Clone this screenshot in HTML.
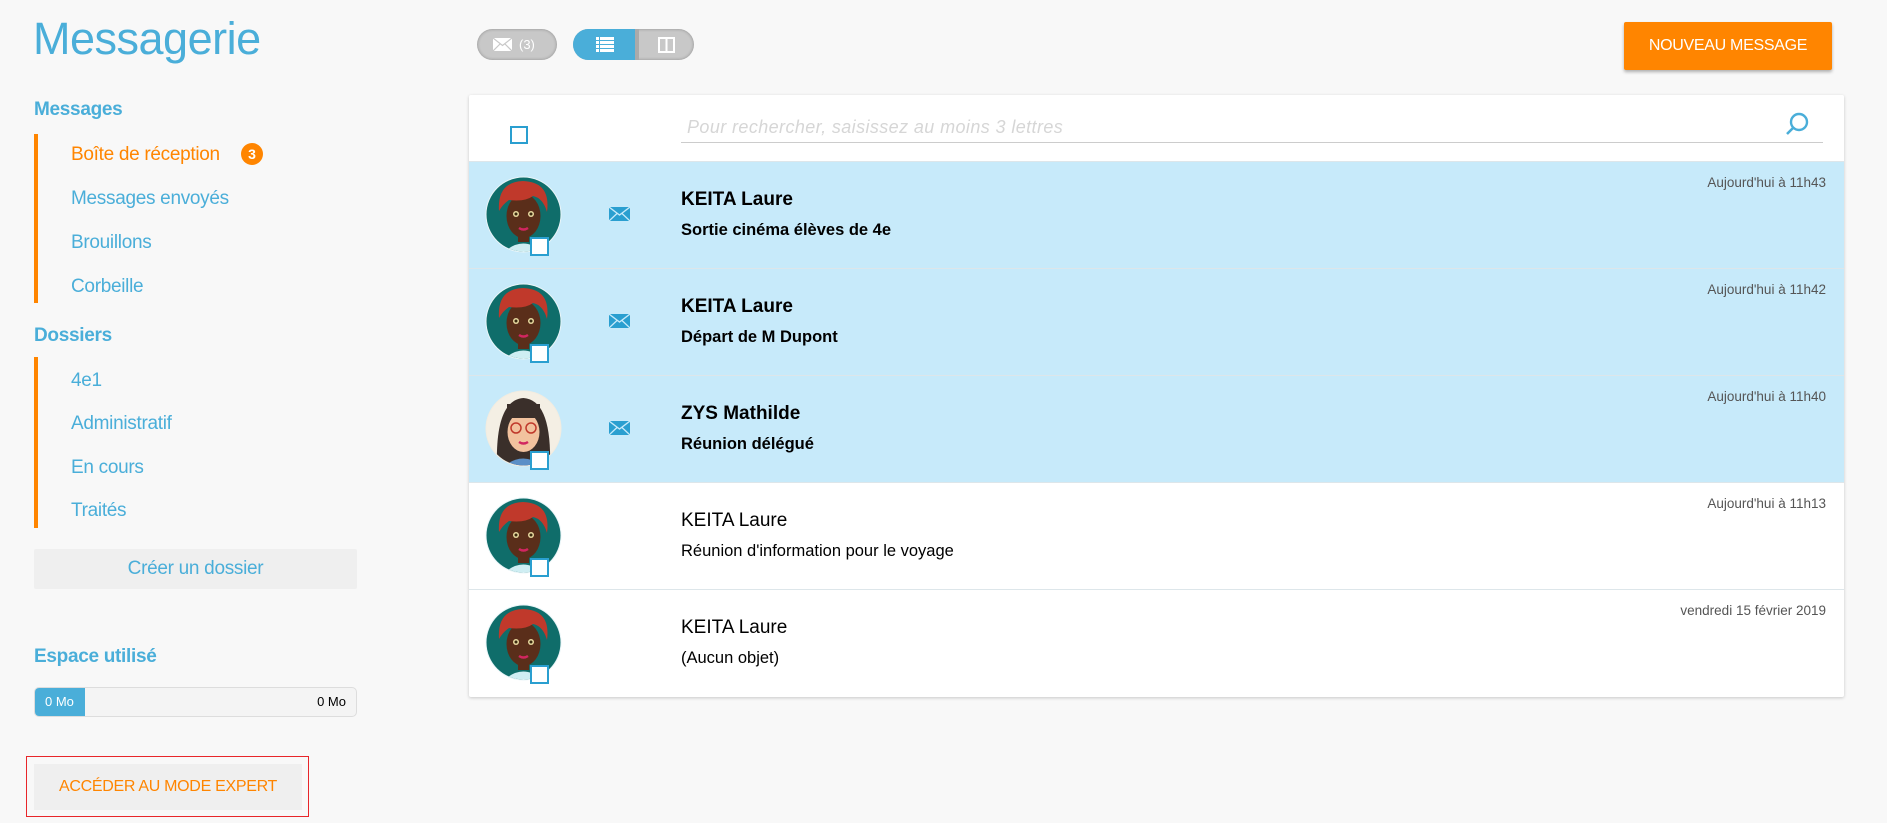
<!DOCTYPE html>
<html><head><meta charset="utf-8"><style>
*{margin:0;padding:0;box-sizing:border-box}
body{width:1887px;height:823px;background:#f8f8f8;font-family:"Liberation Sans",sans-serif;position:relative;overflow:hidden}
.a{position:absolute;white-space:nowrap}
.blue{color:#4aaed9}
.nav{font-size:19px;color:#4aaed9;left:71px;letter-spacing:-0.3px}
.bar{position:absolute;left:34px;width:4px;background:#ff8500}
.card{position:absolute;left:469px;top:95px;width:1375px;height:602px;background:#fff;box-shadow:0 1px 3px rgba(0,0,0,.2);border-radius:2px}
.row{position:absolute;left:0;width:1375px;height:107px;border-top:1px solid #dde6ea}
.row.u{background:#c7eafa}
.av{position:absolute;left:16px;top:14px;width:77px;height:77px}
.cb{position:absolute;left:61px;top:75px;width:19px;height:19px;border:2px solid #2a9fd0;background:#fff}
.env{position:absolute;left:140px;top:45px}
.nm{position:absolute;left:212px;top:27px;font-size:19px;color:#000}
.sb{position:absolute;left:212px;top:59px;font-size:16.5px;color:#000}
.u .nm,.u .sb{font-weight:bold}
.dt{position:absolute;right:18px;top:13px;font-size:13.5px;color:#555}
</style></head><body>
<div class="a blue" style="left:33px;top:13px;font-size:45px;letter-spacing:-0.5px">Messagerie</div>

<div class="a" style="left:477px;top:29px;width:80px;height:31px;border-radius:16px;background:#c8c8c8;box-shadow:inset 0 0 3px rgba(0,0,0,.3)">
<svg style="position:absolute;left:16px;top:9px" width="19" height="13" viewBox="0 0 19 13"><rect width="19" height="13" fill="#fff"/><path d="M0 0L9.5 7.5L19 0M0 13L7 6M19 13L12 6" stroke="#c8c8c8" stroke-width="1.2" fill="none"/></svg>
<span class="a" style="left:42px;top:8px;font-size:13px;color:#fff">(3)</span></div>
<div class="a" style="left:573px;top:29px;width:121px;height:31px;border-radius:16px;background:#c8c8c8;overflow:hidden;box-shadow:inset 0 0 3px rgba(0,0,0,.3)">
<div class="a" style="left:0;top:0;width:62px;height:31px;background:#4aaed9"></div>
<div class="a" style="left:62px;top:0;width:4px;height:31px;background:#aaa"></div>
<svg style="position:absolute;left:23px;top:8px" width="18" height="15" viewBox="0 0 18 15" fill="#fff"><rect x="0" y="0" width="3" height="3"/><rect x="4" y="0" width="14" height="3"/><rect x="0" y="4" width="3" height="3"/><rect x="4" y="4" width="14" height="3"/><rect x="0" y="8" width="3" height="3"/><rect x="4" y="8" width="14" height="3"/><rect x="0" y="12" width="3" height="3"/><rect x="4" y="12" width="14" height="3"/></svg>
<svg style="position:absolute;left:85px;top:8px" width="17" height="16" viewBox="0 0 17 16"><rect x="1" y="1" width="15" height="14" fill="none" stroke="#fff" stroke-width="2"/><rect x="7.5" y="1" width="2" height="14" fill="#fff"/></svg>
</div>

<div class="a" style="left:1624px;top:22px;width:208px;height:48px;background:#ff8500;border-radius:2px;box-shadow:0 2px 3px rgba(0,0,0,.3);color:#fff;font-size:16px;text-align:center;line-height:48px;letter-spacing:-0.3px">NOUVEAU MESSAGE</div>

<div class="a blue" style="left:34px;top:99px;font-size:19px;font-weight:bold;letter-spacing:-0.3px">Messages</div>
<div class="bar" style="top:134px;height:169px"></div>
<div class="a nav" style="top:144px;color:#ff8500">Boîte de réception</div>
<div class="a" style="left:241px;top:143px;width:22px;height:22px;border-radius:50%;background:#ff8500;color:#fff;font-weight:bold;font-size:14px;text-align:center;line-height:22px">3</div>
<div class="a nav" style="top:188px">Messages envoyés</div>
<div class="a nav" style="top:232px">Brouillons</div>
<div class="a nav" style="top:276px">Corbeille</div>
<div class="a blue" style="left:34px;top:325px;font-size:19px;font-weight:bold;letter-spacing:-0.3px">Dossiers</div>
<div class="bar" style="top:357px;height:171px"></div>
<div class="a nav" style="top:370px">4e1</div>
<div class="a nav" style="top:413px">Administratif</div>
<div class="a nav" style="top:457px">En cours</div>
<div class="a nav" style="top:500px">Traités</div>
<div class="a blue" style="left:34px;top:549px;width:323px;height:40px;background:#efefef;border-radius:2px;text-align:center;line-height:40px;font-size:19px;letter-spacing:-0.3px">Créer un dossier</div>
<div class="a blue" style="left:34px;top:646px;font-size:19px;font-weight:bold;letter-spacing:-0.3px">Espace utilisé</div>
<div class="a" style="left:34px;top:687px;width:323px;height:30px;border:1px solid #ddd;border-radius:5px;background:#f4f4f4;overflow:hidden">
<div class="a" style="left:0;top:0;width:50px;height:30px;background:#4aaed9;color:#fff;font-size:13px;line-height:28px;padding-left:10px">0 Mo</div>
<div class="a" style="right:10px;top:0;font-size:13px;line-height:28px;color:#000">0 Mo</div></div>
<div class="a" style="left:26px;top:756px;width:283px;height:61px;border:1.5px solid #e8262a"></div>
<div class="a" style="left:34px;top:764px;width:268px;height:46px;background:#efefef;color:#ff8500;font-size:16px;text-align:center;line-height:46px;letter-spacing:-0.3px">ACCÉDER AU MODE EXPERT</div>

<svg width="0" height="0" style="position:absolute"><defs>
<clipPath id="c"><circle cx="38.5" cy="38.5" r="37"/></clipPath>
<g id="k"><circle cx="38.5" cy="38.5" r="38" fill="#e9f5f8"/><g clip-path="url(#c)"><rect width="77" height="77" fill="#0f6d6a"/><path d="M18 77Q38 58 59 77Z" fill="#cfeef3"/><ellipse cx="38.5" cy="40" rx="17" ry="22" fill="#5a2e1a"/><rect x="33" y="54" width="11" height="12" fill="#5a2e1a"/><path d="M14 35Q12 6 38 5Q66 6 62 36Q58 22 48 20Q40 26 24 24Q18 28 14 35Z" fill="#c0392b"/><circle cx="31" cy="38" r="3" fill="#e8d9a0"/><circle cx="46" cy="38" r="3" fill="#e8d9a0"/><circle cx="31" cy="38" r="1.5" fill="#3a2a10"/><circle cx="46" cy="38" r="1.5" fill="#3a2a10"/><path d="M34 52Q38.5 55 43 52" stroke="#d12660" stroke-width="2.5" fill="none"/></g></g>
<g id="z"><circle cx="38.5" cy="38.5" r="38" fill="#f2ece0"/><g clip-path="url(#c)"><rect width="77" height="77" fill="#f4efe4"/><path d="M12 77Q10 10 38.5 8Q67 10 65 77Z" fill="#3a2f2a"/><path d="M18 77Q38 60 59 77Z" fill="#5b8fc7"/><ellipse cx="38.5" cy="42" rx="16" ry="20" fill="#f2c29e"/><rect x="22" y="14" width="33" height="14" fill="#3a2f2a"/><circle cx="31" cy="38" r="5" fill="none" stroke="#c0392b" stroke-width="1.5"/><circle cx="46" cy="38" r="5" fill="none" stroke="#c0392b" stroke-width="1.5"/><path d="M34 52Q38.5 55 43 52" stroke="#d12660" stroke-width="2.5" fill="none"/></g></g>
<g id="e"><rect width="21" height="14" fill="#2a9fd0"/><path d="M0 0L10.5 8L21 0M0 14L8 6.5M21 14L13 6.5" stroke="#c7eafa" stroke-width="1.3" fill="none"/></g>
</defs></svg>

<div class="card">
<div class="a" style="left:41px;top:31px;width:18px;height:18px;border:2px solid #2a9fd0"></div>
<div class="a" style="left:212px;top:0;width:1142px;height:48px;border-bottom:1px solid #ccc"></div>
<div class="a" style="left:218px;top:22px;font-size:18px;font-style:italic;color:#d6d6d6;letter-spacing:0.4px">Pour rechercher, saisissez au moins 3 lettres</div>
<svg class="a" style="left:1315px;top:16px" width="26" height="26" viewBox="0 0 26 26"><circle cx="15" cy="11" r="8" fill="none" stroke="#4aaed9" stroke-width="2.4"/><path d="M9 17L3 23" stroke="#4aaed9" stroke-width="2.6"/></svg>

<div class="row u" style="top:66px"><svg class="av"><use href="#k"/></svg><div class="cb"></div><svg class="env" width="21" height="14"><use href="#e"/></svg><div class="nm">KEITA Laure</div><div class="sb">Sortie cinéma élèves de 4e</div><div class="dt">Aujourd'hui à 11h43</div></div>
<div class="row u" style="top:173px"><svg class="av"><use href="#k"/></svg><div class="cb"></div><svg class="env" width="21" height="14"><use href="#e"/></svg><div class="nm">KEITA Laure</div><div class="sb">Départ de M Dupont</div><div class="dt">Aujourd'hui à 11h42</div></div>
<div class="row u" style="top:280px"><svg class="av"><use href="#z"/></svg><div class="cb"></div><svg class="env" width="21" height="14"><use href="#e"/></svg><div class="nm">ZYS Mathilde</div><div class="sb">Réunion délégué</div><div class="dt">Aujourd'hui à 11h40</div></div>
<div class="row" style="top:387px"><svg class="av"><use href="#k"/></svg><div class="cb"></div><div class="nm">KEITA Laure</div><div class="sb">Réunion d'information pour le voyage</div><div class="dt">Aujourd'hui à 11h13</div></div>
<div class="row" style="top:494px"><svg class="av"><use href="#k"/></svg><div class="cb"></div><div class="nm">KEITA Laure</div><div class="sb">(Aucun objet)</div><div class="dt">vendredi 15 février 2019</div></div>
</div>
</body></html>
